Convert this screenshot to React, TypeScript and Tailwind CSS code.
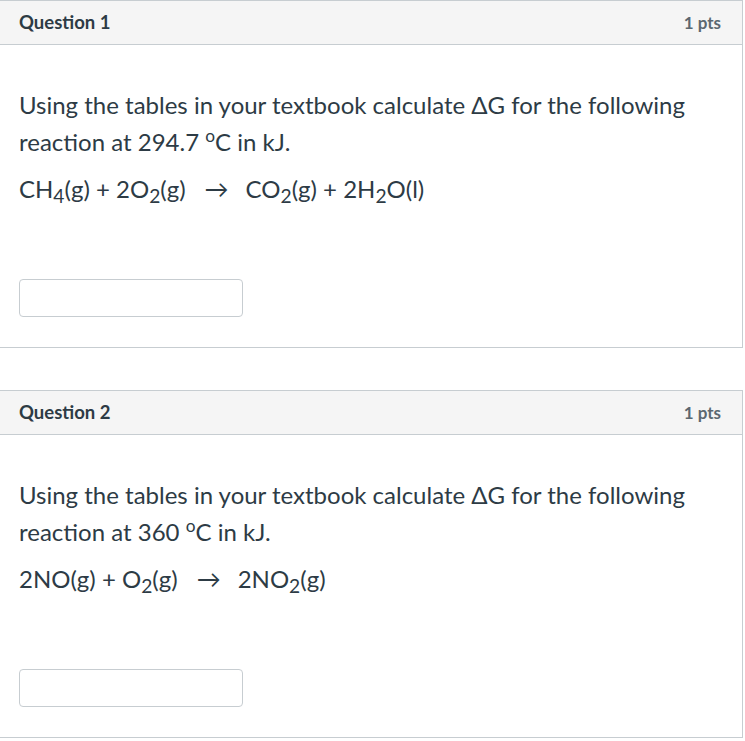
import React from "react";

function Sub({ children }: { children: React.ReactNode }) {
  return <sub className="text-[0.8em]">{children}</sub>;
}

function Deg() {
  return <sup className="text-[0.72em] top-[-0.55em]">o</sup>;
}

function Arrow() {
  return <span className="inline-block ml-[19px] mr-[17px]">→</span>;
}

function Card({ num, children, className = "" }: { num: number; children: React.ReactNode; className?: string }) {
  return (
    <div className={"w-[743px] border border-l-0 border-[#c7cdd1] bg-white " + className}>
      <div className="h-[44px] bg-[#f5f5f5] border-b border-[#c7cdd1] flex items-center justify-between pl-[19px] pr-[21px]">
        <span className="text-[18.5px] font-bold text-[#2d3b45]">Question {num}</span>
        <span className="text-[17px] font-bold text-[#5b6770]">1 pts</span>
      </div>
      <div className="pl-[19px] pr-[20px] pt-[41px] pb-[30px] text-[24px] leading-[37px] text-[#2d3b45]">
        {children}
        <div className="mt-[72px] w-[224px] h-[38px] border border-[#c7cdd1] rounded-[4px]" />
      </div>
    </div>
  );
}

export default function App() {
  return (
    <div className="bg-white min-h-[741px]" style={{ fontFamily: "Lato, 'Open Sans', sans-serif" }}>
      <Card num={1}>
        <p>Using the tables in your textbook calculate ΔG for the following reaction at 294.7 <Deg />C in kJ.</p>
        <p className="mt-[10px]">
          CH<Sub>4</Sub>(g) + 2O<Sub>2</Sub>(g)<Arrow />CO<Sub>2</Sub>(g) + 2H<Sub>2</Sub>O(l)
        </p>
      </Card>
      <Card num={2} className="mt-[42px]">
        <p>Using the tables in your textbook calculate ΔG for the following reaction at 360 <Deg />C in kJ.</p>
        <p className="mt-[10px]">
          2NO(g) + O<Sub>2</Sub>(g)<Arrow />2NO<Sub>2</Sub>(g)
        </p>
      </Card>
    </div>
  );
}
